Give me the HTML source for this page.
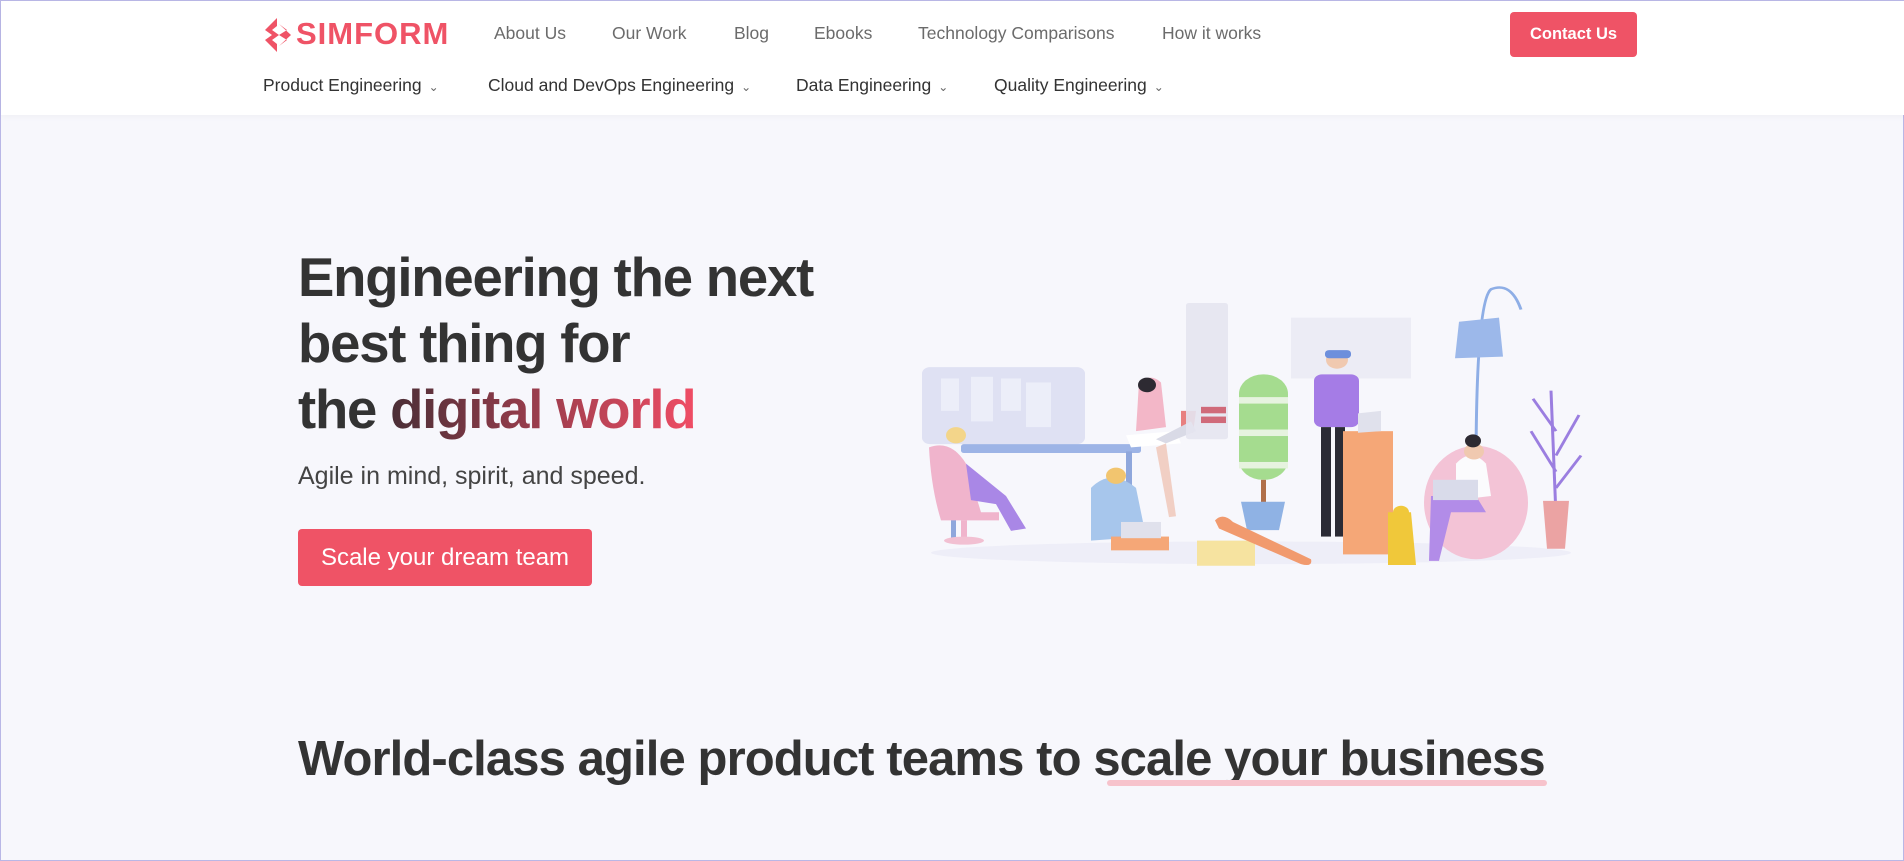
<!DOCTYPE html>
<html><head><meta charset="utf-8">
<style>
*{margin:0;padding:0;box-sizing:border-box}
html,body{width:1904px;height:861px;overflow:hidden}
body{font-family:"Liberation Sans",sans-serif;background:#f7f7fc;position:relative;border:1px solid #b9b7e6}
.hdr{position:absolute;left:0;top:0;width:1904px;height:114px;background:#fff;box-shadow:0 2px 6px rgba(0,0,0,.03)}
.t{position:absolute;white-space:nowrap}
.nav{top:22px;font-size:17.5px;color:#6b6b6b}
.nav2{top:74px;font-size:17.5px;color:#333}
.nav2 span{font-size:12px;margin-left:7px;color:#666}
.btn{position:absolute;background:#ef5366;color:#fff;border-radius:4px;text-align:center}
h1{position:absolute;left:297px;top:244px;font-size:54.5px;line-height:66px;color:#333;font-weight:bold;letter-spacing:-1.2px}
.grad{background:linear-gradient(90deg,#4a2e36,#f04d65);-webkit-background-clip:text;color:transparent}
</style></head><body>
<div class="hdr"></div>
<svg style="position:absolute;left:262px;top:16px" width="30" height="36" viewBox="0 0 30 34"><path d="M14 0 L2 12 L9 17 L2 22 L14 34 L14 26 L9 22 L16 17 L9 12 L14 8Z" fill="#ef5366"/><path d="M16 6 L24 12 L16 17 L24 22 L16 28 L28 17Z" fill="#ef5366"/></svg>
<div class="t" style="left:295px;top:15px;font-size:31px;font-weight:bold;color:#ef5366;letter-spacing:1px">SIMFORM</div>
<div class="t nav" style="left:493px">About Us</div>
<div class="t nav" style="left:611px">Our Work</div>
<div class="t nav" style="left:733px">Blog</div>
<div class="t nav" style="left:813px">Ebooks</div>
<div class="t nav" style="left:917px">Technology Comparisons</div>
<div class="t nav" style="left:1161px">How it works</div>
<div class="btn" style="left:1509px;top:11px;width:127px;height:45px;line-height:45px;font-size:16.5px;font-weight:bold">Contact Us</div>
<div class="t nav2" style="left:262px">Product Engineering<span>&#8964;</span></div>
<div class="t nav2" style="left:487px">Cloud and DevOps Engineering<span>&#8964;</span></div>
<div class="t nav2" style="left:795px">Data Engineering<span>&#8964;</span></div>
<div class="t nav2" style="left:993px">Quality Engineering<span>&#8964;</span></div>

<h1>Engineering the next<br>best thing for<br>the <span class="grad">digital world</span></h1>
<div class="t" style="left:297px;top:461px;font-size:25px;color:#444">Agile in mind, spirit, and speed.</div>
<div class="btn" style="left:297px;top:528px;width:294px;height:57px;line-height:57px;font-size:24px">Scale your dream team</div>

<div class="t" style="left:297px;top:730px;font-size:49px;font-weight:bold;color:#333;letter-spacing:-0.9px">World-class agile product teams to scale your business</div>
<div style="position:absolute;left:1106px;top:779px;width:440px;height:6px;border-radius:3px;background:#f7c3cc;z-index:-0"></div>

<svg style="position:absolute;left:910px;top:268px" width="690" height="300" viewBox="0 0 690 370" preserveAspectRatio="none">
<ellipse cx="340" cy="350" rx="320" ry="14" fill="#eeeef8"/>
<rect x="11" y="121" width="163" height="95" rx="8" fill="#dfe1f3"/>
<g fill="#eceef9"><rect x="30" y="135" width="18" height="40"/><rect x="60" y="133" width="22" height="55"/><rect x="90" y="135" width="20" height="40"/><rect x="115" y="140" width="25" height="55"/></g>
<rect x="50" y="216" width="180" height="11" rx="3" fill="#9db4e6"/>
<rect x="215" y="225" width="6" height="110" fill="#8fa7dc"/><rect x="40" y="225" width="5" height="110" fill="#8fa7dc"/>
<path d="M18 220 Q40 210 55 240 L70 300 L88 300 L88 310 L30 310 Q20 270 18 220Z" fill="#f0b4cc"/>
<rect x="50" y="310" width="6" height="22" fill="#f0b4cc"/><ellipse cx="53" cy="335" rx="20" ry="5" fill="#f2c0d2"/>
<path d="M55 240 L95 280 L115 320 L100 323 L85 290 L60 285Z" fill="#a987e6"/>
<circle cx="45" cy="205" r="10" fill="#f3d58a"/>
<path d="M270 175 L285 175 L282 202 L270 200Z" fill="#e88080"/>
<path d="M228 140 Q240 128 250 140 L255 195 L225 200Z" fill="#f3b7c8"/>
<circle cx="236" cy="143" r="9" fill="#2d2a32"/>
<path d="M215 205 L265 200 L270 215 L220 220Z" fill="#fff"/>
<path d="M255 215 L265 305 L258 306 L245 220Z" fill="#f1cfc4"/>
<path d="M245 210 L280 188 L285 200 L255 215Z" fill="#d9dae6"/>
<rect x="275" y="42" width="42" height="168" rx="3" fill="#e4e4ef" opacity=".9"/>
<rect x="290" y="170" width="25" height="8" fill="#d06a7a"/><rect x="290" y="182" width="25" height="8" fill="#d06a7a"/>
<rect x="328" y="130" width="49" height="130" rx="24" fill="#a5dc8f"/>
<rect x="328" y="158" width="49" height="8" fill="#e6f3df"/><rect x="328" y="198" width="49" height="8" fill="#e6f3df"/><rect x="328" y="238" width="49" height="8" fill="#e6f3df"/>
<rect x="350" y="260" width="5" height="30" fill="#b06f4a"/>
<path d="M330 287 L374 287 L368 322 L336 322Z" fill="#8fb2e4"/>
<rect x="286" y="335" width="58" height="31" fill="#f6e3a0"/>
<path d="M304 310 Q312 300 322 312 L400 358 Q402 368 390 364 L308 320Z" fill="#f19a6e"/>
<rect x="380" y="60" width="120" height="75" fill="#e8e8f2" opacity=".8"/>
<rect x="403" y="130" width="45" height="65" rx="8" fill="#a57ce6"/>
<circle cx="426" cy="112" r="11" fill="#f0c9b0"/><rect x="414" y="100" width="26" height="10" rx="4" fill="#6d8fdc"/>
<rect x="410" y="195" width="10" height="135" fill="#2b2b35"/><rect x="424" y="195" width="10" height="135" fill="#2b2b35"/>
<rect x="432" y="200" width="50" height="152" fill="#f5a777"/>
<path d="M447 178 L470 175 L470 200 L447 202Z" fill="#e0e1ec"/>
<path d="M565 250 Q565 40 580 25 Q600 15 610 50" stroke="#8eaee6" stroke-width="3" fill="none"/>
<path d="M548 65 L588 60 L592 108 L544 110Z" fill="#9cb8ea"/>
<ellipse cx="565" cy="288" rx="52" ry="70" fill="#f3c3d6"/>
<path d="M545 240 Q560 220 575 240 L580 280 L545 285Z" fill="#fbfbfd"/>
<circle cx="563" cy="225" r="10" fill="#f0c9b0"/><circle cx="562" cy="212" r="8" fill="#2d2a32"/>
<path d="M520 280 L565 280 L575 300 L540 300 L528 360 L518 360Z" fill="#b28ce8"/>
<rect x="522" y="260" width="45" height="25" fill="#d9dbea"/>
<path d="M477 300 L500 300 L505 365 L477 365Z" fill="#f0c83a"/><circle cx="490" cy="300" r="8" fill="#f0c83a"/>
<g stroke="#9b7ee0" stroke-width="3" fill="none"><path d="M645 305 L640 150"/><path d="M645 250 L620 200"/><path d="M645 230 L668 180"/><path d="M645 200 L622 160"/><path d="M645 270 L670 230"/></g>
<path d="M632 286 L658 286 L654 345 L636 345Z" fill="#eba3a3"/>
<path d="M180 270 Q200 245 225 270 L235 330 L180 335Z" fill="#a7c6ec"/>
<circle cx="205" cy="255" r="10" fill="#f2c56f"/>
<rect x="200" y="330" width="58" height="17" fill="#f5a777"/><rect x="210" y="312" width="40" height="20" fill="#e0e1ec"/>
</svg>
</body></html>
